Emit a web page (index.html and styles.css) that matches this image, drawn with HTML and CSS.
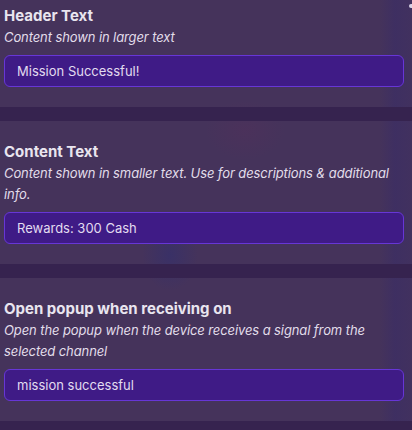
FILE: index.html
```html
<!DOCTYPE html>
<html>
<head>
<meta charset="utf-8">
<link rel="stylesheet" href="styles.css">
</head>
<body>
<div class="panel">
  <span class="corner"></span>
  <div class="list">
    <section class="field">
      <div class="label">Header Text</div>
      <div class="desc">Content shown in larger text</div>
      <div class="input">Mission Successful!</div>
    </section>
    <div class="band"></div>
    <section class="field">
      <div class="label">Content Text</div>
      <div class="desc">Content shown in smaller text. Use for descriptions &amp; additional info.</div>
      <div class="input">Rewards: 300 Cash</div>
    </section>
    <div class="band"></div>
    <section class="field">
      <div class="label">Open popup when receiving on</div>
      <div class="desc">Open the popup when the device receives a signal from the selected channel</div>
      <div class="input">mission successful</div>
    </section>
    <div class="band"></div>
  </div>
</div>
</body>
</html>
```

FILE: styles.css
```css
html, body {
  margin: 0;
  padding: 0;
}
body {
  width: 412px;
  height: 430px;
  overflow: hidden;
  background: #45335b;
  font-family: Inter, "Noto Sans", sans-serif;
}
.panel {
  position: relative;
  width: 412px;
  height: 430px;
  overflow: hidden;
  background:
    radial-gradient(ellipse 28px 36px at 170px 255px, rgba(40, 45, 120, 0.4), rgba(40, 45, 120, 0) 100%),
    radial-gradient(ellipse 40px 30px at 245px 130px, rgba(110, 40, 90, 0.15), rgba(110, 40, 90, 0) 100%),
    linear-gradient(90deg, rgba(0,0,0,0) 0, rgba(0,0,0,0) 380px, rgba(50, 40, 110, 0.35) 395px, rgba(50, 40, 110, 0.2) 412px),
    #45335b;
}
.corner {
  position: absolute;
  top: 4px;
  right: 0;
  width: 3px;
  height: 4px;
  border-radius: 2px 0 0 2px;
  background: #d8d2e6;
}
.list {
  display: flex;
  flex-direction: column;
  margin-top: -15px;
}
.field {
  display: flex;
  flex-direction: column;
  padding: 21px 0 20px 4px;
}
.label {
  font-size: 15px;
  line-height: 20px;
  font-weight: 700;
  color: #e9e5ef;
}
.desc {
  margin-top: 1px;
  font-size: 13px;
  line-height: 21px;
  font-style: italic;
  letter-spacing: -0.1px;
  color: #e2ddea;
}
.input {
  margin: 7px 8px 0 0;
  box-sizing: border-box;
  height: 32px;
  display: flex;
  align-items: center;
  padding: 0 12px;
  background: #3f1b86;
  border: 1px solid #6736d6;
  border-radius: 6px;
  font-size: 13px;
  color: #e2dcf0;
}
.band {
  height: 14px;
  background: #36234f;
}
```
